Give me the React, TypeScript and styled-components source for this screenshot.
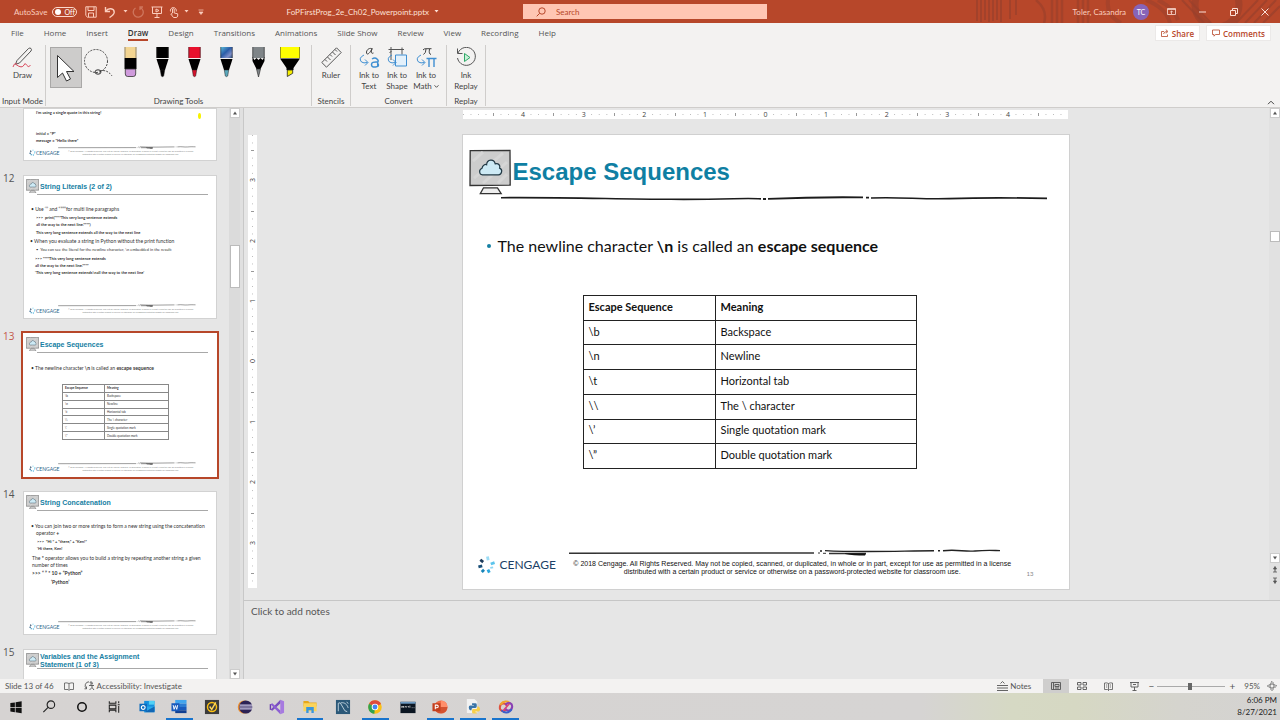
import React from "react";
import styled, { createGlobalStyle, css } from "styled-components";

const ui = `Lato, "Liberation Sans", sans-serif`;
const tabFont = `"Open Sans", "Noto Sans", sans-serif`;
const arial = `"Liberation Sans", Arial, sans-serif`;

const GlobalStyle = createGlobalStyle`
  * { box-sizing: border-box; }
  body { margin: 0; font-family: ${ui}; font-size: 8px; font-variant-ligatures: none; color: #444; background: #e6e6e6; }
  button { font: inherit; color: inherit; background: none; border: 0; padding: 0; margin: 0; }
  h1, h2, p { margin: 0; }
  a { color: inherit; text-decoration: none; }
  svg { display: block; flex: none; }
`;

const Window = styled.div`
  display: flex;
  flex-direction: column;
  height: 100vh;
  min-height: 600px;
  overflow: hidden;
`;

/* ---------- Title bar ---------- */

const TitleBar = styled.header`
  position: relative;
  display: grid;
  grid-template-columns: 1fr 244px 1fr;
  align-items: center;
  height: 23px;
  flex: none;
  padding-left: 10px;
  background: #b7472a;
  color: #fbcdbd;
`;

const TitleArt = styled.svg`
  position: absolute;
  top: 0;
  right: 0;
`;

const TitleSide = styled.div<{ $end?: boolean }>`
  position: relative;
  display: flex;
  align-items: center;
  justify-content: ${(p) => (p.$end ? "flex-end" : "flex-start")};
`;

const AutoSave = styled.button`
  display: flex;
  align-items: center;
  gap: 5px;
  margin: 0 8px 0 4px;
`;

const Switch = styled.span`
  display: flex;
  align-items: center;
  gap: 3px;
  width: 25px;
  height: 10px;
  padding-left: 2px;
  border: 1px solid #fbd9cd;
  border-radius: 5px;
  font-size: 7px;
  color: #fff;
  &::before {
    content: "";
    width: 6px;
    height: 6px;
    border-radius: 50%;
    background: #fff;
  }
`;

const QuickButton = styled.button<{ $w: number; $dim?: boolean }>`
  display: flex;
  justify-content: center;
  width: ${(p) => p.$w}px;
  opacity: ${(p) => (p.$dim ? 0.35 : 1)};
`;

const FileName = styled.button`
  display: flex;
  align-items: center;
  gap: 5px;
  margin: 0 84px 0 auto;
  color: #fde0d6;
`;

const SearchBox = styled.label`
  display: flex;
  align-items: center;
  gap: 10px;
  height: 15px;
  padding-left: 13px;
  background: #ffc6b3;
  color: #b7472a;
  input {
    flex: 1;
    min-width: 0;
    border: 0;
    padding: 0;
    background: none;
    outline: 0;
    font: 8px ${ui};
  }
  input::placeholder { color: #b7472a; opacity: 1; }
`;

const Avatar = styled.span`
  display: grid;
  place-items: center;
  width: 16px;
  height: 16px;
  margin: 0 7px;
  border-radius: 50%;
  background: #8764b8;
  color: #fff;
  font-size: 7px;
`;

const WindowButton = styled.button`
  display: grid;
  place-items: center;
  width: 31px;
  height: 22px;
  color: #fde0d6;
`;

/* ---------- Ribbon ---------- */

const TabRow = styled.nav`
  display: flex;
  align-items: stretch;
  gap: 20px;
  height: 20px;
  flex: none;
  padding: 0 9px 0 11px;
  background: #f3f2f1;
  font-family: ${tabFont};
`;

const Tab = styled.a<{ $active?: boolean }>`
  display: flex;
  align-items: center;
  margin-bottom: 2px;
  padding-top: 2px;
  color: ${(p) => (p.$active ? "#333" : "#555")};
  border-bottom: 2px solid ${(p) => (p.$active ? "#b7472a" : "transparent")};
  font-weight: ${(p) => (p.$active ? 600 : 400)};
`;

const TabActions = styled.div`
  display: flex;
  align-items: center;
  gap: 6px;
  margin-left: auto;
`;

const ActionButton = styled.button`
  display: flex;
  align-items: center;
  gap: 3px;
  height: 16px;
  padding: 0 5px;
  background: #fff;
  border: 1px solid #ebe9e8;
  color: #b7472a;
  font-weight: 600;
`;

const Ribbon = styled.section`
  display: flex;
  flex: none;
  height: 65px;
  padding-bottom: 1px;
  background: #f3f2f1;
  border-bottom: 1px solid #cfcdcb;
`;

const Group = styled.div<{ $w: number }>`
  display: flex;
  flex-direction: column;
  width: ${(p) => p.$w}px;
  border-right: 1px solid #cfcdcb;
  margin-top: 2px;
`;

const GroupTools = styled.div<{ $start?: boolean }>`
  display: flex;
  flex: 1;
  align-items: flex-start;
  justify-content: ${(p) => (p.$start ? "flex-start" : "center")};
  padding: ${(p) => (p.$start ? "2px 0 0 4px" : "2px 0 0")};
`;

const GroupLabel = styled.span`
  line-height: 10px;
  text-align: center;
  white-space: nowrap;
`;

const ToolButton = styled.button<{ $w?: number }>`
  display: flex;
  flex-direction: column;
  align-items: center;
  width: ${(p) => p.$w ?? 28}px;
  line-height: 11px;
  white-space: nowrap;
  svg { margin-bottom: 2px; }
`;

const MenuLine = styled.span`
  display: flex;
  align-items: center;
  gap: 2px;
  svg { margin: 0; }
`;

const SelectButton = styled.button`
  display: grid;
  place-items: center;
  width: 32px;
  height: 41px;
  background: #cdcccb;
  border: 1px solid #a9a8a7;
`;

const PenButton = styled.button`
  display: flex;
  justify-content: center;
  width: 32px;
`;

const RibbonCollapse = styled.button`
  align-self: flex-end;
  margin: 0 5px 1px auto;
`;

/* ---------- Work area ---------- */

const Workspace = styled.main`
  display: flex;
  flex: 1;
  min-height: 0;
  background: #e6e6e6;
`;

const ThumbPane = styled.aside`
  display: flex;
  width: 244px;
  flex: none;
  border-right: 1px solid #c8c8c8;
`;

const PaneEdge = styled.div`
  width: 3px;
  background: #e0e0e0;
`;

const ThumbList = styled.ol`
  flex: 1;
  margin: 0;
  padding: 0;
  list-style: none;
  overflow: hidden;
`;

const ThumbRow = styled.li<{ $cut?: boolean }>`
  display: grid;
  grid-template-columns: 23px 194px;
  margin-bottom: 14px;
  height: ${(p) => (p.$cut ? 53 : 144)}px;
`;

const ThumbNumber = styled.span<{ $on?: boolean }>`
  padding-left: 3px;
  font: 10px/6px ${tabFont};
  color: ${(p) => (p.$on ? "#c4574a" : "#555")};
`;

const Thumb = styled.article<{ $on?: boolean }>`
  display: flex;
  flex-direction: column;
  justify-content: flex-end;
  min-height: 0;
  overflow: hidden;
  background: #fff;
  border: 1px solid #d2d2d2;
  color: #333;
  ${(p) =>
    p.$on &&
    css`
      border-color: #fff;
      outline: 2px solid #b7472a;
    `}
`;

const ThumbHead = styled.div`
  display: flex;
  gap: 1px;
  height: 18px;
  flex: none;
  padding: 3px 0 0 2px;
`;

const ThumbTitle = styled.h2<{ $two?: boolean }>`
  width: 110px;
  padding-top: ${(p) => (p.$two ? 0 : 4)}px;
  font: bold 7px/8px ${arial};
  color: #1580a3;
`;

const ThumbRule = styled.div`
  height: 1px;
  flex: none;
  margin: 0 8px 0 13px;
  background: #a8a8a8;
`;

const ThumbBody = styled.div`
  flex: 1;
  min-height: 0;
  padding-top: 11px;
  font-size: 5px;
  line-height: 7px;
`;

const ThumbLine = styled.p<{ $bold?: boolean; $in: number; $gap?: number; $small?: boolean }>`
  padding-left: ${(p) => p.$in}px;
  margin-top: ${(p) => p.$gap ?? 0}px;
  font-weight: ${(p) => (p.$bold ? 700 : 400)};
  font-size: ${(p) => (p.$small ? 4 : 5)}px;
  white-space: pre;
`;

const CutLines = styled.div`
  position: relative;
  margin-top: -11px;
`;

const Marker = styled.i`
  position: absolute;
  top: 4px;
  right: 15px;
  width: 3px;
  height: 6px;
  border-radius: 50%;
  background: #f7f200;
`;

const ThumbTable = styled.table`
  width: 107px;
  height: 56px;
  margin: 12px 0 0 38px;
  border-collapse: collapse;
  font-size: 3px;
  line-height: 4px;
  th, td { border: 1px solid #888; padding: 0 2px; text-align: left; }
  th:first-child { width: 42px; }
`;

const ThumbFooter = styled.footer`
  flex: none;
  height: 14px;
  padding: 0 6px 0 5px;
`;

const ThumbFooterRow = styled.div`
  display: flex;
  align-items: center;
  font-size: 5px;
  line-height: 6px;
  color: #2b6488;
`;

const ThumbLegal = styled.p`
  flex: 1;
  margin: 0 14px 0 6px;
  font: 2px/3px ${arial};
  color: #777;
  text-align: center;
`;

const ScrollBar = styled.div<{ $dark?: boolean }>`
  display: flex;
  flex-direction: column;
  align-items: center;
  width: 11px;
  flex: none;
  background: ${(p) => (p.$dark ? "#dbdbdb" : "#e1e1e1")};
`;

const ScrollArrow = styled.button<{ $plain?: boolean }>`
  display: grid;
  place-items: center;
  width: 10px;
  height: ${(p) => (p.$plain ? 12 : 10)}px;
  flex: none;
  background: ${(p) => (p.$plain ? "none" : "#fff")};
  border: ${(p) => (p.$plain ? "0" : "1px solid #ccc")};
`;

const ScrollThumb = styled.div<{ $h: number }>`
  width: 10px;
  height: ${(p) => p.$h}px;
  flex: none;
  background: #fff;
  border: 1px solid #bbb;
`;

const Space = styled.div<{ $n: number }>`
  flex: ${(p) => p.$n} 1 0;
`;

const ScrollEnd = styled.div`
  height: 13px;
`;

const Editor = styled.section`
  display: flex;
  flex: 1;
  min-width: 0;
  flex-direction: column;
`;

const Stage = styled.div`
  display: flex;
  height: 493px;
  flex: none;
  border-bottom: 1px solid #c6c6c6;
`;

const RulerLeft = styled.div`
  display: flex;
  width: 18px;
  flex: none;
  padding: 27px 5px 12px 4px;
`;

const Canvas = styled.div`
  display: flex;
  flex: 1;
  min-width: 0;
  flex-direction: column;
  align-items: center;
  gap: 15px;
  padding-top: 2px;
`;

const HRuler = styled.div`
  display: grid;
  grid-template-columns: 1fr repeat(9, 2fr) 1fr;
  width: 606px;
  height: 9px;
  flex: none;
`;

const VRuler = styled.div`
  display: grid;
  grid-template-rows: 1fr repeat(7, 4fr) 1fr;
  flex: 1;
`;

const TickX = styled.div<{ $step: number }>`
  display: grid;
  place-items: center;
  min-width: 0;
  font: 7px/9px ${tabFont};
  color: #444;
  background:
    linear-gradient(#999, #999) left center / 1px 3px no-repeat,
    linear-gradient(90deg, #bbb 1px, transparent 1px) left center / ${(p) => p.$step}% 1px repeat-x,
    #fff;
  &:first-child { background: linear-gradient(90deg, #bbb 1px, #fff 1px) left center / ${(p) => p.$step}% 1px repeat-x, #fff; }
  span {
    padding: 0 3px;
    background: #fff;
  }
`;

const TickY = styled.div<{ $step: number }>`
  display: grid;
  place-items: center;
  min-height: 0;
  font: 7px/9px ${tabFont};
  color: #444;
  background:
    linear-gradient(#999, #999) center top / 3px 1px no-repeat,
    linear-gradient(#bbb 1px, transparent 1px) center top / 1px ${(p) => p.$step}% repeat-y,
    #fff;
  &:first-child { background: linear-gradient(#bbb 1px, #fff 1px) center top / 1px ${(p) => p.$step}% repeat-y, #fff; }
  span {
    padding: 3px 0;
    background: #fff;
    writing-mode: vertical-rl;
    transform: rotate(180deg);
  }
`;

const Slide = styled.article`
  display: flex;
  flex-direction: column;
  width: 608px;
  height: 456px;
  flex: none;
  background: #fff;
  border: 1px solid #d0d0d0;
  color: #111;
`;

const SlideHead = styled.header`
  display: flex;
  gap: 2px;
  height: 59px;
  padding: 14px 0 0 6px;
`;

const SlideTitle = styled.h1`
  padding-top: 9px;
  font: bold 24px/28px ${arial};
  color: #0f7fa3;
`;

const TitleStrokeWrap = styled.div`
  padding-left: 38px;
`;

const Bullet = styled.p`
  display: flex;
  align-items: center;
  gap: 7px;
  padding: 33px 0 0 24px;
  font-size: 16px;
  line-height: 22px;
  &::before {
    content: "";
    width: 4px;
    height: 4px;
    border-radius: 50%;
    background: #1580a3;
  }
`;

const DataTable = styled.table`
  width: 334px;
  height: 174px;
  margin: 38px 0 0 120px;
  border-collapse: collapse;
  font-size: 11px;
  line-height: 14px;
  th, td {
    border: 1px solid #222;
    padding: 0 5px 2px;
    text-align: left;
  }
  th:first-child { width: 132px; }
`;

const SlideFoot = styled.footer`
  margin-top: auto;
  padding-bottom: 14px;
`;

const FootStrokeWrap = styled.div`
  margin-bottom: -3px;
  padding-left: 106px;
`;

const SlideFootRow = styled.div`
  display: flex;
  align-items: flex-start;
  height: 20px;
  padding: 0 35px 0 14px;
`;

const Brand = styled.div`
  display: flex;
  align-items: center;
  gap: 4px;
  font-size: 12px;
  line-height: 18px;
  color: #1c3f66;
`;

const Legal = styled.p`
  flex: 1;
  margin: 5px 0 0 5px;
  font: 7px/8px ${arial};
  text-align: center;
`;

const PageNumber = styled.span`
  align-self: flex-end;
  margin-left: 3px;
  font-size: 6px;
  line-height: 2px;
  color: #888;
`;

const Notes = styled.textarea`
  flex: 1;
  min-height: 0;
  border: 0;
  outline: 0;
  resize: none;
  padding: 4px 7px;
  background: #e6e6e6;
  font: 10px/12px ${ui};
  &::placeholder { color: #555; opacity: 1; }
`;

/* ---------- Status bar and taskbar ---------- */

const StatusBar = styled.footer`
  display: flex;
  align-items: center;
  height: 14px;
  flex: none;
  padding-left: 5px;
  background: #f3f2f1;
  color: #555;
`;

const StatusItem = styled.button<{ $gap: number }>`
  display: flex;
  align-items: center;
  gap: 2px;
  margin-right: ${(p) => p.$gap}px;
`;

const StatusRight = styled.div`
  display: flex;
  align-items: center;
  margin-left: auto;
  padding-right: 3px;
`;

const ViewButton = styled.button<{ $on?: boolean }>`
  display: grid;
  place-items: center;
  width: 26px;
  height: 14px;
  background: ${(p) => (p.$on ? "#cfcecd" : "none")};
`;

const ZoomSlider = styled.input`
  appearance: none;
  width: 68px;
  height: 9px;
  margin: 0 3px 0 2px;
  background: linear-gradient(#aaa, #aaa) center / 100% 1px no-repeat;
  &::-webkit-slider-thumb {
    appearance: none;
    width: 4px;
    height: 7px;
    background: #666;
  }
`;

const ZoomStep = styled.button`
  width: 8px;
  font-size: 10px;
  line-height: 10px;
`;

const ZoomValue = styled.button`
  margin: 0 7px 0 8px;
`;

const Taskbar = styled.footer`
  display: flex;
  justify-content: space-between;
  height: 27px;
  flex: none;
  background: linear-gradient(90deg, #d6d3d2 0, #d6d4d3 72%, #d6d9c4 79%, #d6d8c3 84%, #d5d4ce 92%, #d4d3d2 100%);
`;

const TaskList = styled.nav`
  display: flex;
  width: 522px;
`;

const TaskButton = styled.button<{ $on?: boolean }>`
  display: grid;
  place-items: center;
  flex: 1;
  position: relative;
  ${(p) =>
    p.$on &&
    css`
      &::after {
        content: "";
        position: absolute;
        left: 3px;
        right: 3px;
        bottom: 0;
        height: 2px;
        background: #1874cd;
      }
    `}
`;

const Clock = styled.time`
  padding: 1px 3px 0 0;
  text-align: right;
  line-height: 12px;
  color: #222;
`;

/* ---------- Drawings ---------- */

type IconProps = { w?: number; h?: number; vb: string; sw?: number; children: React.ReactNode };
const Icon = ({ w = 12, h = 12, vb, sw = 1, children }: IconProps) => (
  <svg width={w} height={h} viewBox={vb} fill="none" stroke="currentColor" strokeWidth={sw} aria-hidden="true">
    {children}
  </svg>
);

const Caret = () => (
  <Icon w={5} h={3} vb="0 0 5 3"><path d="M0.5 0h4l-2 2.5z" fill="currentColor" stroke="none" /></Icon>
);

const Triangle = ({ down }: { down?: boolean }) => (
  <Icon w={6} h={4} vb="0 0 6 4"><path d={down ? "M1 0.5h4l-2 3z" : "M1 3.5h4l-2-3z"} fill="#555" stroke="none" /></Icon>
);

const DoubleArrow = ({ down }: { down?: boolean }) => (
  <Icon w={6} h={8} vb="0 0 6 8">
    <path d={down ? "M1 1h4M1.500 4h3L3 6.500z" : "M1 7h4M1.500 4h3L3 1.500z"} fill="#555" stroke="#555" strokeWidth=".8" />
    <path d={down ? "M3 1v3" : "M3 7V4"} stroke="#555" />
  </Icon>
);

const Monitor = ({ size }: { size: number }) => (
  <svg width={size} height={size * 1.1} viewBox="0 0 42 46" aria-hidden="true">
    <path d="M1.2 1.6 41 1.2 41.2 36 1 36.4z" fill="#cdcdcd" stroke="#333" strokeWidth="1.3" />
    <path d="M4 12 14 3M5 29 34 4M14 34 38 13M29 34l9-9" stroke="#d6d6d6" strokeWidth="3" />
    <path d="M13.500 25.800C10 25.300 9.500 20.600 13 19.200 13.500 15.600 16.500 15 17.600 15.600 18 10 25 9.500 26.200 14.700 29.800 14 31.500 16.500 30.600 19 34.200 20.200 32.700 25.700 29.500 25.800z" fill="#cdeaf5" stroke="#223a46" strokeWidth="1.200" />
    <path d="M14.500 38.700h14l3.700 5.900H11.300z" fill="#eee" stroke="#333" strokeWidth="1.300" />
  </svg>
);

const TitleStroke = () => (
  <svg width="548" height="8" viewBox="0 0 548 8" aria-hidden="true">
    <path d="M0 3.700C60 3.200 110 4.900 170 5.300S245 3.500 260 4.900" fill="none" stroke="#1c1c1c" strokeWidth="1.600" />
    <path d="M262 5h3M267 4.800C300 3.500 330 3 362 3.400" fill="none" stroke="#1c1c1c" strokeWidth="1.800" />
    <path d="M365 3.600h3M370 4C400 2.800 420 5.500 448 4.600S500 3.400 546 4.400" fill="none" stroke="#1c1c1c" strokeWidth="1.600" />
  </svg>
);

const FootStroke = ({ w = 432 }: { w?: number }) => (
  <svg width={w} height={(w * 10) / 432} viewBox="0 0 432 10" aria-hidden="true">
    <path d="M0 5.300 245 5M260 5.400h37" fill="none" stroke="#333" strokeWidth="1.500" />
    <path d="M249 5h2M254 5.300h3" fill="none" stroke="#333" />
    <path d="M276 5.300 297 5.600 296 7.500C288 7.500 282 7 276 6z" fill="#111" />
    <path d="M251 3h2M256 2.600C290 4.500 330 3 365 2.800M369 2.800h2M374 2.800C388 1 395 4 406 3S422 2.400 431 2.600" fill="none" stroke="#222" strokeWidth="1.400" />
  </svg>
);

const ThumbStrokeWrap = styled.div`
  padding-left: 29px;
`;

const CengageMark = ({ size }: { size: number }) => (
  <svg width={size} height={size} viewBox="0 0 20 20" fill="none" strokeWidth="3" aria-hidden="true">
    <path d="M11 1.500l.8 4" stroke="#9bdcf5" /><path d="M18.500 8l-4 1.500" stroke="#5cc4ec" />
    <path d="M17 13l-3 .5" stroke="#8fd6f2" strokeWidth="2" /><path d="M13 18.500l-1.500-3" stroke="#2aa6dd" />
    <path d="M5 17.800l2.400-2.300" stroke="#1684b8" /><path d="M1.500 12.500l4-1" stroke="#1a4f78" />
    <path d="M3.500 5l3 2.500" stroke="#1d3c5c" />
  </svg>
);

type PenProps = { top: string; tip: string; tipped?: "eraser" | "pencil" | "marker" };
const Pen = ({ top, tip, tipped }: PenProps) => {
  if (tipped === "eraser")
    return (
      <Icon w={13} h={31} vb="0 0 13 31">
        <path d="M.5 0h12v11H.5z" fill={top} stroke="none" /><path d="M.5 11h12v11H.5z" fill="#000" stroke="none" />
        <path d="M1.300 22h10.400v5q0 2.500-2.500 2.500H3.800q-2.500 0-2.500-2.500z" fill={tip} stroke="#333" strokeWidth=".8" />
        <path d="M1 0v11M12 0v11" stroke="#555" strokeWidth=".6" />
      </Icon>
    );
  if (tipped === "marker")
    return (
      <Icon w={20} h={31} vb="0 0 20 31">
        <path d="M0 0h20v11H0z" fill={top} stroke="none" /><path d="M0 0v11M20 0v11" stroke="#333" />
        <path d="M0 11.500h20l-6.500 9.500v2h-7v-2z" fill="#000" stroke="none" />
        <path d="M7.300 23h5.400v3.300l-5.400 3.200z" fill={tip} stroke="#222" strokeWidth=".8" />
      </Icon>
    );
  return (
    <Icon w={13} h={31} vb="0 0 13 31">
      <path d="M.5 0h12v11H.5z" fill={top} stroke="none" />
      <path d="M.8 0v11M12.200 0v11" stroke="#222" strokeWidth=".6" />
      {tipped === "pencil" ? (
        <>
          <path d="M.5 10l2 3 2-2 2 2 2-2 2 2 2-3v4L8.500 22h-4L.5 14z" fill="#000" stroke="none" />
          <path d="M4.500 22h4L6.500 30z" fill={tip} stroke="#222" strokeWidth=".6" />
        </>
      ) : (
        <>
          <path d="M.5 12h12L9 23H4z" fill="#000" stroke="none" />
          <path d="M4.300 23h4.400L7.700 29q-1.200 1.300-2.400 0z" fill={tip} stroke="#222" strokeWidth=".5" />
        </>
      )}
    </Icon>
  );
};

/* ---------- Data ---------- */

const tabs = ["File", "Home", "Insert", "Draw", "Design", "Transitions", "Animations", "Slide Show", "Review", "View", "Recording", "Help"];

const escapes: [string, string][] = [
  ["\\b", "Backspace"],
  ["\\n", "Newline"],
  ["\\t", "Horizontal tab"],
  ["\\\\", "The \\ character"],
  ["\\’", "Single quotation mark"],
  ["\\”", "Double quotation mark"],
];

const legalTop = "© 2018 Cengage. All Rights Reserved. May not be copied, scanned, or duplicated, in whole or in part, except for use as permitted in a license";
const legalBottom = "distributed with a certain product or service or otherwise on a password-protected website for classroom use.";

const EscapeRows = () => (
  <tbody>
    <tr><th scope="col">Escape Sequence</th><th scope="col">Meaning</th></tr>
    {escapes.map(([code, meaning]) => (
      <tr key={code}><td>{code}</td><td>{meaning}</td></tr>
    ))}
  </tbody>
);

const ThumbFoot = () => (
  <ThumbFooter>
    <ThumbStrokeWrap><FootStroke w={138} /></ThumbStrokeWrap>
    <ThumbFooterRow>
      <CengageMark size={7} />
      CENGAGE
      <ThumbLegal>{legalTop}<br />{legalBottom}</ThumbLegal>
    </ThumbFooterRow>
  </ThumbFooter>
);

type ThumbCardProps = { n: number; title: string; two?: boolean; on?: boolean; headOnly?: boolean; children?: React.ReactNode };
const ThumbCard = ({ n, title, two, on, headOnly, children }: ThumbCardProps) => (
  <ThumbRow>
    <ThumbNumber $on={on}>{n}</ThumbNumber>
    <Thumb $on={on}>
      <ThumbHead><Monitor size={13} /><ThumbTitle $two={two}>{title}</ThumbTitle></ThumbHead>
      <ThumbRule />
      <ThumbBody>{children}</ThumbBody>
      {!headOnly && <ThumbFoot />}
    </Thumb>
  </ThumbRow>
);

const taskIcons: { name: string; on?: boolean; art: React.ReactNode }[] = [
  { name: "Start", art: <path d="M2 4.300l4.800-.7v4.900H2zM7.600 3.500 14 2.500v6H7.600zM2 9.200h4.800v4.900L2 13.400zM7.600 9.200H14v6l-6.400-1z" fill="#111" /> },
  { name: "Search", art: <><circle cx="10" cy="6" r="4" fill="none" stroke="#222" strokeWidth="1.200" /><path d="M7 9l-5 5" stroke="#222" strokeWidth="1.200" /></> },
  { name: "Cortana", art: <circle cx="8" cy="8.500" r="4.500" fill="none" stroke="#111" strokeWidth="1.600" /> },
  { name: "Task View", art: <path d="M3 2.500v2h7v-2M3 14v-2h7v2M3 6.500h7v4H3zM13 2.500v2M13 7.500v7M12 6h2" fill="none" stroke="#222" strokeWidth="1.100" /> },
  { name: "Outlook", art: <><path d="M5 2h11v11H5z" fill="#1490df" /><path d="M10 2h6v4h-6z" fill="#50d0f5" /><path d="M4 8l12 0v6H5z" fill="#28a8ea" /><path d="M5 14l11-6v6z" fill="#1066b5" /><path d="M0 5h8v8H0z" fill="#0f6cbd" /><circle cx="4" cy="9" r="2" fill="none" stroke="#fff" strokeWidth="1.200" /></> },
  { name: "Word", on: true, art: <><path d="M4 1h12v4H4z" fill="#41a5ee" /><path d="M4 5h12v3.500H4z" fill="#2b7cd3" /><path d="M4 8.500h12V12H4z" fill="#185abd" /><path d="M4 12h12v3H4z" fill="#103f91" /><path d="M0 4.500h8.500V13H0z" fill="#185abd" /><path d="M1.800 6.500l1 4.500 1.400-4 1.400 4 1-4.500" fill="none" stroke="#fff" /></> },
  { name: "Norton", art: <><path d="M.5 1h15v15H.5z" fill="#3b3b3b" /><circle cx="8" cy="8.500" r="4.800" fill="none" stroke="#fdc010" strokeWidth="1.500" /><path d="M5.500 8l2.200 3L12 3.500" fill="none" stroke="#fdd75a" strokeWidth="1.500" /></> },
  { name: "Eclipse", art: <><circle cx="7.300" cy="8.500" r="7" fill="#e98a2c" /><circle cx="8.800" cy="8.500" r="7" fill="#2c2255" /><path d="M2.500 6.500h13M2 8.500h14M2.500 10.500h13" stroke="#c9c3e2" strokeWidth="1.200" /></> },
  { name: "Visual Studio", art: <><path d="M11.500.8 15.500 2.500v12l-4 1.700z" fill="#a77ae0" /><path d="M11.500.8v4L3 12.500 1 11.500l8-8z" fill="#7a4fc0" /><path d="M11.500 16.200v-4L3 4.500 1 5.500l8 8z" fill="#8d5fd3" /><path d="M1 5.500v6" stroke="#6b3fb0" strokeWidth="1.500" /></> },
  { name: "File Explorer", on: true, art: <><path d="M1 2h5l1.500 1.800H15V8H1z" fill="#e7a81c" /><path d="M1 4.500h14V13H1z" fill="#fbd45c" /><path d="M4 8.500h8V15H9.500v-3h-3v3H4z" fill="#3a96dd" /></> },
  { name: "MySQL Workbench", art: <><path d="M.5 1h15v15H.5z" fill="#2b5878" /><path d="M3 13V4.500L5 4l5 8.500 2.500 1M6 4c4-.5 6.500 2 7.500 5.500M12 3l1.500 2" fill="none" stroke="#cfe0ea" strokeWidth=".9" /></> },
  { name: "Chrome", on: true, art: <><circle cx="8" cy="8.500" r="7.200" fill="#fbc116" /><path d="M8 8.500 1.700 5A7.200 7.200 0 0 1 14.400 5.200z" fill="#dd4b3e" /><path d="M8 8.500 1.700 5A7.200 7.200 0 0 0 7.300 15.700z" fill="#31a350" /><circle cx="8" cy="8.500" r="3.500" fill="#fff" /><circle cx="8" cy="8.500" r="2.600" fill="#4285f4" /></> },
  { name: "Terminal", art: <><path d="M0 3h16v12H0z" fill="#0b1622" /><path d="M0 3h16v2H0z" fill="#6f9cc4" /><path d="M1.500 9.500V7.500l1 1.200 1-1.200v2M5 7.500l1 1.500 1-1.500M8.500 9V7.500M10 7v2.300M12 9.200h.8M14 9.200h.8" fill="none" stroke="#ddd" strokeWidth=".8" /></> },
  { name: "PowerPoint", on: true, art: <><circle cx="9" cy="8.500" r="7" fill="#ed6c47" /><path d="M9 1.500a7 7 0 0 1 7 7H9z" fill="#ff8f6b" /><path d="M2.500 11a7 7 0 0 0 13.400-2.500H9z" fill="#d35230" /><path d="M0 4.500h8.500V13H0z" fill="#c43e1c" /><path d="M3 11V6.500h1.800a1.300 1.300 0 0 1 0 2.700H3" fill="none" stroke="#fff" strokeWidth="1.100" /></> },
  { name: "Python", on: true, art: <><path d="M1.500 0h8l3 3v12h-11z" fill="#f2f2f2" /><path d="M7 4.500h3.500q1.500 0 1.500 1.500v2q0 1.500-1.500 1.500H8q-1.500 0-1.500 1.500v1H5q-1.500-1-1.500-3T5 7h4V6.300H7z" fill="#3a74a8" /><path d="M12.500 8H14q1.500 1 1.500 3T14 13.300h-3.500v.7H12v1.500H8.500Q7 15.500 7 14v-2q0-1.300 1.500-1.300H11q1.500 0 1.500-1.500z" fill="#f7cf4a" /></> },
  { name: "Snip", on: true, art: <g fill="none" strokeWidth="2.200" strokeLinecap="round"><path d="M8.500 6.500C6.500 3.500 2 4.500 1.500 8.500S5 14 8 11.500" stroke="#e0513f" /><path d="M2.500 5.500C5 2 10 2 12 4.500" stroke="#f2a32c" /><path d="M7.500 10.500c2 3 6.500 2 7-2S11 3 8 5.500" stroke="#8a3fb5" /><path d="M13.500 11.500c-2.500 3.500-7.500 3.500-9.500 1" stroke="#3c5fc9" /><path d="M5.500 12 11 5.500" stroke="#d8437a" strokeWidth="1.800" /></g> },
];

/* ---------- Page ---------- */

const TitleArea = () => (
  <TitleBar>
    <TitleArt width="306" height="23" viewBox="0 0 306 23" fill="none" stroke="#98402c" aria-hidden="true">
      <path d="M3 0v21M7 0v22M11 0v20M15 0v22M19 0v21M23 0v20M27 0v22M36 0v19M42 0v15" strokeWidth="2" opacity=".7" />
      <path d="M62 0q12 10 8 23M78 0v23M83 0v23M88 0v23M104 0v23M109 0v23M114 0v23" strokeWidth="2.500" opacity=".6" />
      <path d="M134 0q-2 16 13 23M172 0q20 8 24 23M184 0q16 8 20 20" strokeWidth="4" opacity=".5" />
      <circle cx="243" cy="5" r="22" strokeWidth="7" opacity=".6" />
      <path d="M262 23 284 0M271 23 293 0M280 23 302 0M289 23 306 6M215 0l22 23M208 0l22 23" strokeWidth="2" opacity=".7" />
    </TitleArt>
    <TitleSide>
      <AutoSave aria-label="AutoSave off">AutoSave <Switch>Off</Switch></AutoSave>
      <QuickButton $w={11} aria-label="Save"><Icon vb="0 0 12 12"><path d="M.8.800h10.400v10.400H2.500L.8 9.500zM3 .8v3.700h6V.8M3.500 11V7h5v4" /></Icon></QuickButton>
      <QuickButton $w={27} aria-label="Undo"><Icon vb="0 0 12 12" sw={1.4}><path d="M1.500 1v4.500H6M1.800 5.300C4 1.500 10.500 2 10.200 6.500 10 8.500 8 10 5.500 11.500" /></Icon></QuickButton>
      <QuickButton $w={4} aria-label="Undo list"><Caret /></QuickButton>
      <QuickButton $w={22} $dim aria-label="Redo"><Icon vb="0 0 12 12" sw={1.3}><path d="M8 1.500A5 5 0 1 1 3.500 2M8 4V1h3" /></Icon></QuickButton>
      <QuickButton $w={16} aria-label="Start slide show"><Icon vb="0 0 12 12"><path d="M.5 1h11M1.500 1v6.500h9V1M6 7.500V11M3.500 11.500h5M5 3l3 1.500L5 6z" /></Icon></QuickButton>
      <QuickButton $w={18} aria-label="Touch mode"><Icon vb="0 0 12 12"><path d="M4.500 7V3q1-1 1.700 0v4l3.500.8V10l-1 1.500H5.500L2.800 8q.5-1 1.700 0M2.500 5.500a3 3 0 1 1 5.700 0" /></Icon></QuickButton>
      <QuickButton $w={6} aria-label="Mode list"><Caret /></QuickButton>
      <QuickButton $w={24} aria-label="Customize toolbar"><Icon w={6} h={6} vb="0 0 6 6"><path d="M.5 1h5M1 3h4L3 5.500z" fill="currentColor" strokeWidth=".7" /></Icon></QuickButton>
      <FileName>FoPFirstProg_2e_Ch02_Powerpoint.pptx <Caret /></FileName>
    </TitleSide>
    <SearchBox>
      <Icon w={10} h={10} vb="0 0 10 10"><circle cx="6" cy="4" r="3.200" /><path d="M3.700 6.300.7 9.300" /></Icon>
      <input type="search" aria-label="Search" placeholder="Search" />
    </SearchBox>
    <TitleSide $end>
      Toler, Casandra
      <Avatar>TC</Avatar>
      <WindowButton aria-label="Ribbon display options"><Icon w={9} h={7} vb="0 0 9 7"><path d="M.5.500h8v6h-8zM.5 1.500h8M4.500 6V3M3.200 4.200l1.300-1.300 1.300 1.300" strokeWidth=".8" /></Icon></WindowButton>
      <WindowButton aria-label="Minimize"><Icon w={7} h={2} vb="0 0 7 2"><path d="M0 1h7" /></Icon></WindowButton>
      <WindowButton aria-label="Restore"><Icon w={8} h={8} vb="0 0 8 8"><path d="M.5 2.500h5v5h-5zM2.500 2V.5h5v5H6" /></Icon></WindowButton>
      <WindowButton aria-label="Close"><Icon w={8} h={8} vb="0 0 8 8"><path d="M.5.500l7 7M7.500.500l-7 7" /></Icon></WindowButton>
    </TitleSide>
  </TitleBar>
);

const RibbonArea = () => (
  <>
    <TabRow>
      {tabs.map((t) => <Tab key={t} href="#" $active={t === "Draw"}>{t}</Tab>)}
      <TabActions>
        <ActionButton><Icon w={8} h={8} vb="0 0 8 8" sw={0.8}><path d="M3 2.500H.5v5h6V5.500M2.500 5Q3 2.500 6 2.500M4.800.7l2.200 1.800-2.200 1.800" /></Icon>Share</ActionButton>
        <ActionButton><Icon w={8} h={8} vb="0 0 8 8" sw={0.8}><path d="M.5 1h7v4.500H3.500L2 7.200V5.500H.5z" /></Icon>Comments</ActionButton>
      </TabActions>
    </TabRow>
    <Ribbon>
      <Group $w={46}>
        <GroupTools>
          <ToolButton>
            <Icon w={21} h={21} vb="0 0 21 21"><path d="M5 13.500 16.500 1.500q1.500-1 2.500 0t0 2.500L7.500 16 3.500 17.300z" stroke="#555" /><path d="M1 20q1-4 3.500-3.500M4 17.500Q10 22 12 18q1-3 2.500 0t4 .5" stroke="#d9485b" /></Icon>
            Draw
          </ToolButton>
        </GroupTools>
        <GroupLabel>Input Mode</GroupLabel>
      </Group>
      <Group $w={266}>
        <GroupTools $start>
          <SelectButton aria-label="Select"><Icon w={20} h={28} vb="0 0 20 28"><path d="M1.500 1.500v22l5-4.500 4 8 4-2-4-7.500h7.500z" fill="#fff" stroke="#333" /></Icon></SelectButton>
          <PenButton aria-label="Lasso"><Icon w={30} h={31} vb="0 0 30 31"><circle cx="13" cy="14" r="11.500" stroke="#444" strokeDasharray="2 1.200" /><ellipse cx="15" cy="25" rx="3" ry="2.200" stroke="#333" /><path d="M17 24q7-2 12 5" stroke="#444" strokeDasharray="2 1.200" /></Icon></PenButton>
          <PenButton aria-label="Eraser"><Pen top="#f3d592" tip="#cf9bdc" tipped="eraser" /></PenButton>
          <PenButton aria-label="Black pen"><Pen top="#000" tip="#000" /></PenButton>
          <PenButton aria-label="Red pen"><Pen top="#e8112d" tip="#d4122b" /></PenButton>
          <PenButton aria-label="Galaxy pen"><Pen top="url(#galaxy)" tip="#5aa9bd" /></PenButton>
          <PenButton aria-label="Pencil"><Pen top="#7f8588" tip="#7f8588" tipped="pencil" /></PenButton>
          <PenButton aria-label="Highlighter"><Pen top="#ffff00" tip="#f6ee00" tipped="marker" /></PenButton>
          <svg width="0" height="0" aria-hidden="true"><defs><linearGradient id="galaxy" x1="0" y1="0" x2="1" y2="1"><stop offset="0" stopColor="#5fc0dc" /><stop offset=".45" stopColor="#2b5da8" /><stop offset=".75" stopColor="#7f8fc9" /><stop offset="1" stopColor="#2c4f7d" /></linearGradient></defs></svg>
        </GroupTools>
        <GroupLabel>Drawing Tools</GroupLabel>
      </Group>
      <Group $w={39}>
        <GroupTools>
          <ToolButton>
            <Icon w={21} h={21} vb="0 0 21 21"><path d="M.8 15.500 15.500.8 20.200 5.500 5.500 20.200zM4 12.500l2 2M6.500 10l3 3M9 7.500l2 2M11.500 5l3 3M14 2.500l2 2" stroke="#555" /></Icon>
            Ruler
          </ToolButton>
        </GroupTools>
        <GroupLabel>Stencils</GroupLabel>
      </Group>
      <Group $w={96}>
        <GroupTools $start>
          <ToolButton>
            <Icon w={21} h={21} vb="0 0 21 21"><path d="M13.500 2C11 .5 8 2 7.500 5s2.500 3 5-2.500q.3-1 .5-1-2 6 1.500 4.500" stroke="#444" /><path d="M5 8Q-1 11 2.500 15q2 1.500 6 .5M6 12.500l3 3-3 3" stroke="#3f8fd2" /><path d="M13 12q3-2 5 0t.7 3v5M18.500 15q-6-.5-6 2.500t4 2.500 2.500-3" stroke="#3f8fd2" strokeWidth="1.500" /></Icon>
            Ink to<br />Text
          </ToolButton>
          <ToolButton>
            <Icon w={21} h={21} vb="0 0 21 21"><path d="M4 0v13M1.500 2.500H17M15 .5v7M2.500 5.500l2-1" stroke="#555" /><path d="M8.500 8h11v11h-11z" fill="#e4f1fb" stroke="#3f8fd2" /><path d="M5 8Q-1 11 2.500 15q2 1.500 6 .5M6 12.500l3 3-3 3" stroke="#3f8fd2" /></Icon>
            Ink to<br />Shape
          </ToolButton>
          <ToolButton $w={30}>
            <Icon w={21} h={21} vb="0 0 21 21"><path d="M7 3q1-1.500 3-1.300h5.500M10 2Q10 6 7.500 7.500M13.500 2q-1 5 1.500 5.500" stroke="#444" /><path d="M5 8Q-1 11 2.500 15q2 1.500 6 .5M6 12.500l3 3-3 3" stroke="#3f8fd2" /><path d="M10.500 11.500h10M13 12v8M18 12v8" stroke="#3f8fd2" strokeWidth="1.400" /></Icon>
            Ink to
            <MenuLine>Math <Icon w={5} h={3} vb="0 0 5 3" sw={0.9}><path d="M.5.300l2 2 2-2" /></Icon></MenuLine>
          </ToolButton>
        </GroupTools>
        <GroupLabel>Convert</GroupLabel>
      </Group>
      <Group $w={39}>
        <GroupTools>
          <ToolButton>
            <Icon w={21} h={21} vb="0 0 21 21"><path d="M2 6A9 9 0 1 1 1.500 11M1.500 1.500V6.500H6.500" stroke="#555" /><path d="M8.500 6.500 14 10.500 8.500 14.500z" fill="#c9efd8" stroke="#2ea866" /></Icon>
            Ink<br />Replay
          </ToolButton>
        </GroupTools>
        <GroupLabel>Replay</GroupLabel>
      </Group>
      <RibbonCollapse aria-label="Collapse ribbon"><Icon w={8} h={5} vb="0 0 8 5"><path d="M1 4.200l3-3 3 3" /></Icon></RibbonCollapse>
    </Ribbon>
  </>
);

const Thumbnails = () => (
  <ThumbPane>
    <ThumbList>
      <ThumbRow $cut>
        <span />
        <Thumb>
          <ThumbBody>
            <CutLines>
              <ThumbLine $in={12} $bold $small>I’m using a single quote in this string!</ThumbLine>
              <ThumbLine $in={12} $bold $gap={14} $small>initial = “P”</ThumbLine>
              <ThumbLine $in={12} $bold $small>message = “Hello there”</ThumbLine>
              <Marker />
            </CutLines>
          </ThumbBody>
          <ThumbFoot />
        </Thumb>
      </ThumbRow>
      <ThumbCard n={12} title="String Literals (2 of 2)">
        <ThumbLine $in={7}>{"• Use ‘’’ and “”””for multi line paragraphs"}</ThumbLine>
        <ThumbLine $in={12} $bold $gap={1} $small>{">>>  print(“”””This very long sentence extends"}</ThumbLine>
        <ThumbLine $in={12} $bold $small>all the way to the next line.””””)</ThumbLine>
        <ThumbLine $in={12} $bold $gap={1} $small>This very long sentence extends all the way to the next line</ThumbLine>
        <ThumbLine $in={6} $gap={2}>{"• When you evaluate a string in Python without the print function"}</ThumbLine>
        <ThumbLine $in={12} $gap={1} $small>{"•  You can see the literal for the newline character, \\n embedded in the result:"}</ThumbLine>
        <ThumbLine $in={11} $bold $gap={2} $small>{">>> “”””This very long sentence extends"}</ThumbLine>
        <ThumbLine $in={11} $bold $small>all the way to the next line.””””</ThumbLine>
        <ThumbLine $in={11} $bold $small>{"‘This very long sentence extends\\nall the way to the next line’"}</ThumbLine>
      </ThumbCard>
      <ThumbCard n={13} title="Escape Sequences" on>
        <ThumbLine $in={7} $gap={1}>• The newline character <b>\n</b> is called an <b>escape sequence</b></ThumbLine>
        <ThumbTable><EscapeRows /></ThumbTable>
      </ThumbCard>
      <ThumbCard n={14} title="String Concatenation">
        <ThumbLine $in={7} $gap={1}>{"• You can join two or more strings to form a new string using the concatenation"}</ThumbLine>
        <ThumbLine $in={12}>operator <b>+</b></ThumbLine>
        <ThumbLine $in={13} $bold $gap={1} $small>{">>>  “Hi ” + “there,” + “Ken!”"}</ThumbLine>
        <ThumbLine $in={13} $bold $small>‘Hi there, Ken!</ThumbLine>
        <ThumbLine $in={8} $gap={3}>The <b>*</b> operator allows you to build a string by repeating another string a given</ThumbLine>
        <ThumbLine $in={8}>number of times</ThumbLine>
        <ThumbLine $in={8} $bold $gap={1}>{">>> “ ” * 10 + “Python”"}</ThumbLine>
        <ThumbLine $in={27} $bold $gap={2}>‘Python’</ThumbLine>
      </ThumbCard>
      <ThumbCard n={15} title="Variables and the Assignment Statement (1 of 3)" two headOnly />
    </ThumbList>
    <ScrollBar $dark>
      <ScrollArrow aria-label="Scroll up"><Triangle /></ScrollArrow>
      <Space $n={126} />
      <ScrollThumb $h={43} />
      <Space $n={379} />
      <ScrollArrow aria-label="Scroll down"><Triangle down /></ScrollArrow>
    </ScrollBar>
    <PaneEdge />
  </ThumbPane>
);

const EditorArea = () => (
  <Editor>
    <Stage>
      <RulerLeft>
        <VRuler>
          {["", 3, 2, 1, 0, 1, 2, 3, ""].map((n, i) => (
            <TickY key={i} $step={n === "" ? 50 : 12.5}>{n !== "" && <span>{n}</span>}</TickY>
          ))}
        </VRuler>
      </RulerLeft>
      <Canvas>
        <HRuler>
          {["", 4, 3, 2, 1, 0, 1, 2, 3, 4, ""].map((n, i) => (
            <TickX key={i} $step={n === "" ? 25 : 12.5}>{n !== "" && <span>{n}</span>}</TickX>
          ))}
        </HRuler>
        <Slide>
          <SlideHead><Monitor size={42} /><SlideTitle>Escape Sequences</SlideTitle></SlideHead>
          <TitleStrokeWrap><TitleStroke /></TitleStrokeWrap>
          <Bullet><span>The newline character <b>\n</b> is called an <b>escape sequence</b></span></Bullet>
          <DataTable><EscapeRows /></DataTable>
          <SlideFoot>
            <FootStrokeWrap><FootStroke /></FootStrokeWrap>
            <SlideFootRow>
              <Brand><CengageMark size={19} />CENGAGE</Brand>
              <Legal>{legalTop}<br />{legalBottom}</Legal>
              <PageNumber>13</PageNumber>
            </SlideFootRow>
          </SlideFoot>
        </Slide>
      </Canvas>
      <ScrollBar>
        <ScrollArrow aria-label="Previous page"><Triangle /></ScrollArrow>
        <Space $n={113} />
        <ScrollThumb $h={11} />
        <Space $n={311} />
        <ScrollArrow aria-label="Next page"><Triangle down /></ScrollArrow>
        <ScrollArrow $plain aria-label="Previous slide"><DoubleArrow /></ScrollArrow>
        <ScrollArrow $plain aria-label="Next slide"><DoubleArrow down /></ScrollArrow>
        <ScrollEnd />
      </ScrollBar>
    </Stage>
    <Notes aria-label="Notes" placeholder="Click to add notes" />
  </Editor>
);

const StatusArea = () => (
  <StatusBar>
    <StatusItem $gap={10}>Slide 13 of 46</StatusItem>
    <StatusItem $gap={10} aria-label="Spelling"><Icon w={10} h={9} vb="0 0 10 9" sw={0.8}><path d="M5 1.500Q3 .5.500 1v6.500H4l1 1 1-1h3.500V1Q7 .5 5 1.500v6.500" /></Icon></StatusItem>
    <StatusItem $gap={0}><Icon w={11} h={10} vb="0 0 11 10" sw={0.9}><path d="M5 .8A3.800 3.800 0 0 0 2.500 7.500M2.500 5.500v2.300H.5M6.500 3.500 9 2M8 3.500v3l2 2.500M8 6.500 5.500 9M5 4.500h5" /><circle cx="7" cy="1.500" r=".8" /></Icon>Accessibility: Investigate</StatusItem>
    <StatusRight>
      <StatusItem $gap={12}><Icon w={11} h={10} vb="0 0 11 10" sw={0.9}><path d="M0 4.500h11M0 7h11M0 9.500h11M3.500 2.500l2-2 2 2" /></Icon>Notes</StatusItem>
      <ViewButton $on aria-label="Normal"><Icon w={10} h={8} vb="0 0 10 8" sw={0.9}><path d="M.5.500h9v7h-9zM2.500.500v7M4 2.500h4v2H4zM4 6h4" /></Icon></ViewButton>
      <ViewButton aria-label="Slide sorter"><Icon w={10} h={8} vb="0 0 10 8" sw={0.9}><path d="M.5.500h3.500v2.500H.5zM6 .5h3.500v2.500H6zM.5 5h3.500v2.500H.5zM6 5h3.500v2.500H6z" /></Icon></ViewButton>
      <ViewButton aria-label="Reading view"><Icon w={9} h={9} vb="0 0 9 9" sw={0.8}><path d="M4.500 1.500Q3 .5.500 1v6.500h3l1 1 1-1h3V1Q6 .5 4.500 1.500v7M2 3h1.200M2 5h1.200M5.800 3H7M5.800 5H7" /></Icon></ViewButton>
      <ViewButton aria-label="Slide show"><Icon w={9} h={9} vb="0 0 9 9" sw={0.9}><path d="M0 .5h9M1 .5v4.500h7V.5M4.500 5v3.500M2.500 8.500h4M3 2.500h3" /></Icon></ViewButton>
      <ZoomStep aria-label="Zoom out">−</ZoomStep>
      <ZoomSlider type="range" aria-label="Zoom" min={0} max={100} defaultValue={48} />
      <ZoomStep aria-label="Zoom in">+</ZoomStep>
      <ZoomValue>95%</ZoomValue>
      <button aria-label="Fit slide to window"><Icon w={10} h={10} vb="0 0 10 10" sw={0.9}><path d="M3 3h4v4H3zM3.700 1.800 5 .5l1.300 1.300M3.700 8.200 5 9.500l1.300-1.300M1.800 3.700.5 5l1.300 1.300M8.200 3.700 9.500 5 8.200 6.300" /></Icon></button>
    </StatusRight>
  </StatusBar>
);

export default function App() {
  return (
    <>
      <GlobalStyle />
      <Window>
        <TitleArea />
        <RibbonArea />
        <Workspace>
          <Thumbnails />
          <EditorArea />
        </Workspace>
        <StatusArea />
        <Taskbar>
          <TaskList aria-label="Applications">
            {taskIcons.map((t) => (
              <TaskButton key={t.name} $on={t.on} aria-label={t.name}>
                <svg width="16" height="16" viewBox="0 0 16 17" aria-hidden="true">{t.art}</svg>
              </TaskButton>
            ))}
          </TaskList>
          <Clock>6:06 PM<br />8/27/2021</Clock>
        </Taskbar>
      </Window>
    </>
  );
}
